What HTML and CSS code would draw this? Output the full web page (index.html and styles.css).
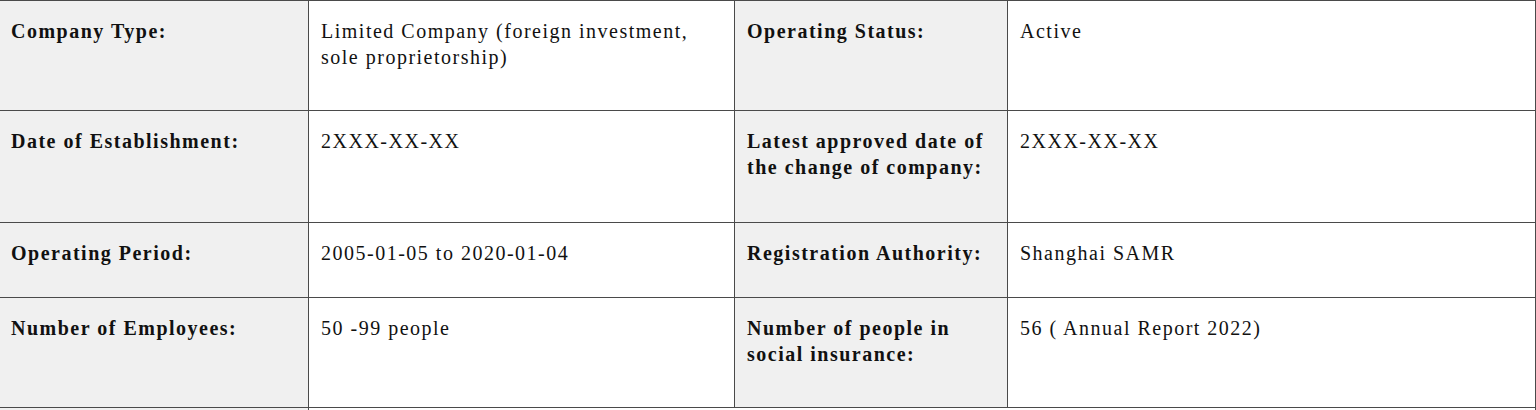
FILE: index.html
```html
<!DOCTYPE html>
<html lang="en">
<head>
<meta charset="utf-8">
<title>Company Information</title>
<link rel="stylesheet" href="styles.css">
</head>
<body>
<div class="info-table">
  <div class="cell label first">Company Type:</div>
  <div class="cell value">Limited Company (foreign investment, sole proprietorship)</div>
  <div class="cell label">Operating Status:</div>
  <div class="cell value">Active</div>

  <div class="cell label first">Date of Establishment:</div>
  <div class="cell value">2XXX-XX-XX</div>
  <div class="cell label">Latest approved date of the change of company:</div>
  <div class="cell value">2XXX-XX-XX</div>

  <div class="cell label first">Operating Period:</div>
  <div class="cell value">2005-01-05 to 2020-01-04</div>
  <div class="cell label">Registration Authority:</div>
  <div class="cell value">Shanghai SAMR</div>

  <div class="cell label first">Number of Employees:</div>
  <div class="cell value">50 -99 people</div>
  <div class="cell label">Number of people in social insurance:</div>
  <div class="cell value">56 ( Annual Report 2022)</div>

  <div class="cell label first next"></div>
  <div class="cell value wide next"></div>
</div>
</body>
</html>
```

FILE: styles.css
```css
html, body {
  margin: 0;
  padding: 0;
  background: #ffffff;
  overflow: hidden;
}

.info-table {
  display: grid;
  grid-template-columns: 309px 426px 273px 528px;
  grid-template-rows: 110px 112px 75px 110px 2px;
  border-top: 1px solid #4a4a4a;
  width: 1536px;
  font-family: "Liberation Serif", "Times New Roman", serif;
  font-size: 20px;
  line-height: 26px;
  letter-spacing: 1.5px;
  color: #111111;
}

.cell {
  border-right: 1px solid #4a4a4a;
  border-bottom: 1px solid #4a4a4a;
  padding: 17px 10px 0 12px;
  overflow: hidden;
}

.cell.first {
  padding-left: 11px;
}

.label {
  background: #f0f0f0;
  font-weight: bold;
}

.value {
  background: #ffffff;
}

.wide {
  grid-column: span 3;
}

.next {
  padding: 0;
  border-bottom: none;
}
```
